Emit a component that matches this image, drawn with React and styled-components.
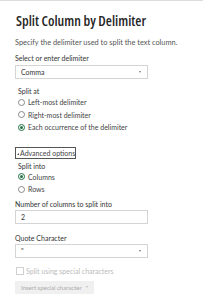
import React from "react";
import styled, { createGlobalStyle } from "styled-components";

const Global = createGlobalStyle`
  html, body { margin: 0; padding: 0; background: #fff; }
  body { font-family: Lato, "Open Sans", sans-serif; color: #333; }
`;

const Page = styled.div`
  width: 203px;
  height: 300px;
  box-sizing: border-box;
  border-top: 1px solid #dcdcdc;
  padding: 11px 0 0 15px;
  overflow: hidden;
`;

const Title = styled.h1`
  margin: 0 0 0 1px;
  font-family: "Open Sans", Lato, sans-serif;
  font-size: 14px;
  font-weight: 600;
  font-stretch: 77%;
  color: #252525;
  line-height: 18px;
  white-space: nowrap;
`;

const Desc = styled.p`
  margin: 8px 0 0 0;
  font-size: 7.4px;
  color: #555;
  line-height: 10px;
  white-space: nowrap;
`;

const Label = styled.div`
  font-size: 7px;
  color: #333;
  line-height: 9px;
  white-space: nowrap;
  margin-top: ${(p) => p.$mt || 0}px;
  margin-left: ${(p) => p.$ml || 0}px;
`;

const Box = styled.div`
  width: 133px;
  height: 14px;
  box-sizing: border-box;
  border: 1px solid #d4d4d4;
  margin-top: ${(p) => p.$mt ?? 2}px;
  display: flex;
  align-items: center;
  justify-content: space-between;
  padding: 0 5px 0 5px;
  font-size: 7px;
  color: #333;
`;

const Caret = styled.span`
  width: 0;
  height: 0;
  border-left: 1.5px solid transparent;
  border-right: 1.5px solid transparent;
  border-top: 2px solid #777;
  margin-right: 1px;
`;

const Group = styled.div`
  margin-left: 3px;
  display: flex;
  flex-direction: column;
`;

const RadioRow = styled.div`
  display: flex;
  align-items: center;
  gap: 3px;
  height: 12.5px;
  font-size: 7px;
  color: #444;
  white-space: nowrap;
`;

const RadioCircle = styled.span`
  width: 7px;
  height: 7px;
  box-sizing: border-box;
  border-radius: 50%;
  border: 1px solid ${(p) => (p.$on ? "#217346" : "#8a8a8a")};
  display: flex;
  align-items: center;
  justify-content: center;
  &::after {
    content: "";
    width: 3px;
    height: 3px;
    border-radius: 50%;
    background: ${(p) => (p.$on ? "#217346" : "transparent")};
  }
`;

const AdvBtn = styled.div`
  margin-top: 13px;
  width: 61px;
  height: 12px;
  box-sizing: border-box;
  border: 1px solid #555;
  display: flex;
  align-items: center;
  gap: 1px;
  padding-left: 1px;
  font-size: 7px;
  color: #444;
  white-space: nowrap;
`;

const Tri = styled.span`
  width: 0;
  height: 0;
  border-left: 2px solid transparent;
  border-bottom: 2px solid #444;
  margin-top: 2px;
`;

const CheckRow = styled.div`
  display: flex;
  align-items: center;
  gap: 2px;
  margin-top: 9px;
  margin-left: 1px;
  font-size: 7px;
  color: #bbb;
  white-space: nowrap;
`;

const CheckBox = styled.span`
  width: 6px;
  height: 6px;
  border: 1px solid #d0d0d0;
`;

const DisabledBtn = styled.div`
  margin-top: 6px;
  width: 79px;
  height: 13px;
  background: #f0f0f0;
  display: flex;
  align-items: center;
  gap: 4px;
  padding-left: 6px;
  box-sizing: border-box;
  font-size: 6px;
  color: #aaa;
  white-space: nowrap;
`;

const SmallCaret = styled(Caret)`
  border-top-color: #bbb;
`;

const Radio = ({ on, children }) => (
  <RadioRow>
    <RadioCircle $on={on} />
    <span>{children}</span>
  </RadioRow>
);

export default function App() {
  return (
    <>
      <Global />
      <Page>
        <Title>Split Column by Delimiter</Title>
        <Desc>Specify the delimiter used to split the text column.</Desc>
        <Label $mt={6}>Select or enter delimiter</Label>
        <Box $mt={2}>
          <span>Comma</span>
          <Caret />
        </Box>
        <Label $mt={8} $ml={3}>Split at</Label>
        <Group>
          <Radio>Left-most delimiter</Radio>
          <Radio>Right-most delimiter</Radio>
          <Radio on>Each occurrence of the delimiter</Radio>
        </Group>
        <AdvBtn>
          <Tri />
          <span>Advanced options</span>
        </AdvBtn>
        <Label $mt={3} $ml={3}>Split into</Label>
        <Group>
          <Radio on>Columns</Radio>
          <Radio>Rows</Radio>
        </Group>
        <Label $mt={4}>Number of columns to split into</Label>
        <Box $mt={1}>
          <span>2</span>
        </Box>
        <Label $mt={10}>Quote Character</Label>
        <Box $mt={1}>
          <span>"</span>
          <Caret />
        </Box>
        <CheckRow>
          <CheckBox />
          <span>Split using special characters</span>
        </CheckRow>
        <DisabledBtn>
          <span>Insert special character</span>
          <SmallCaret />
        </DisabledBtn>
      </Page>
    </>
  );
}
